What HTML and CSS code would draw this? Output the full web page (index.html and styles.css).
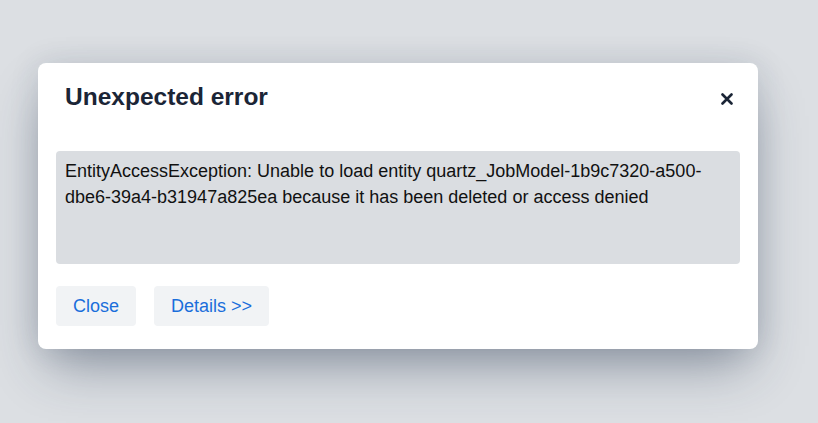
FILE: index.html
```html
<!DOCTYPE html>
<html>
<head>
<meta charset="utf-8">
<link rel="stylesheet" href="styles.css">
</head>
<body>
<div class="stage">
  <div class="dialog">
    <div class="header">
      <h1 class="title">Unexpected error</h1>
      <button class="close-x" aria-label="Close">
        <svg width="12" height="12" viewBox="0 0 12 12"><path d="M1.5 1.5 L10.5 10.5 M10.5 1.5 L1.5 10.5" stroke="#1b2536" stroke-width="2.6" stroke-linecap="round"/></svg>
      </button>
    </div>
    <div class="message">EntityAccessException: Unable to load entity quartz_JobModel-1b9c7320-a500-dbe6-39a4-b31947a825ea because it has been deleted or access denied</div>
    <div class="actions">
      <button class="btn">Close</button>
      <button class="btn">Details &gt;&gt;</button>
    </div>
  </div>
</div>
</body>
</html>
```

FILE: styles.css
```css
html, body {
  margin: 0;
  padding: 0;
}
body {
  background: #dcdfe3;
  font-family: "Liberation Sans", Arial, sans-serif;
  width: 818px;
  height: 423px;
  overflow: hidden;
}
.stage {
  padding: 63px 0 0 38px;
}
.dialog {
  width: 720px;
  height: 286px;
  box-sizing: border-box;
  background: #ffffff;
  border-radius: 8px;
  box-shadow: 0 25px 50px -10px rgba(40, 55, 80, 0.45), 0 0 30px rgba(40, 55, 80, 0.12);
  padding: 0 18px;
  display: flex;
  flex-direction: column;
}
.header {
  display: flex;
  align-items: center;
  justify-content: space-between;
  height: 70px;
  padding: 0 0 0 9px;
}
.title {
  margin: 0 0 2px 0;
  font-size: 24.5px;
  font-weight: bold;
  color: #1b2536;
}
.close-x {
  border: none;
  background: transparent;
  padding: 0;
  margin: 1px 7px 0 0;
  width: 12px;
  height: 12px;
  display: flex;
}
.message {
  margin-top: 18px;
  height: 113px;
  box-sizing: border-box;
  background: #dadde1;
  border-radius: 4px;
  padding: 8px 9px;
  font-size: 18px;
  line-height: 25.5px;
  color: #111111;
}
.actions {
  display: flex;
  gap: 18px;
  margin-top: 22px;
}
.btn {
  border: none;
  background: #f1f3f5;
  border-radius: 4px;
  height: 40px;
  padding: 0 17px;
  font-family: "Liberation Sans", Arial, sans-serif;
  font-size: 18px;
  color: #1a6edb;
}
```
